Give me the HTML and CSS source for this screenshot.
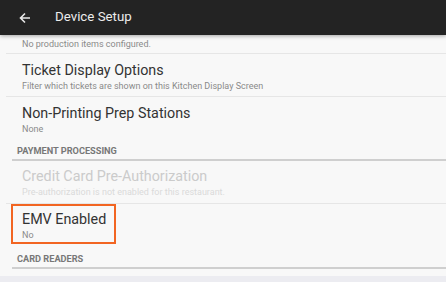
FILE: index.html
```html
<!DOCTYPE html>
<html lang="en">
<head>
  <meta charset="UTF-8" />
  <meta name="viewport" content="width=device-width, initial-scale=1.0" />
  <title>Device Setup</title>
  <link rel="stylesheet" href="styles.css">
</head>
<body>
  <div class="app-bar">
    <svg class="back" width="12" height="12" viewBox="0 0 12 12">
      <path d="M11 6H1.5M6 1.5L1.5 6L6 10.5" fill="none" stroke="#e8e8e8" stroke-width="1.6"/>
    </svg>
    <span class="app-title">Device Setup</span>
  </div>

  <div class="list">
    <div class="item item-partial">
      <div class="item-sub">No production items configured.</div>
    </div>

    <div class="item">
      <div class="item-title">Ticket Display Options</div>
      <div class="item-sub">Filter which tickets are shown on this Kitchen Display Screen</div>
    </div>

    <div class="item no-border">
      <div class="item-title">Non-Printing Prep Stations</div>
      <div class="item-sub">None</div>
    </div>

    <div class="section">Payment Processing</div>

    <div class="item item-disabled">
      <div class="item-title">Credit Card Pre-Authorization</div>
      <div class="item-sub">Pre-authorization is not enabled for this restaurant.</div>
    </div>

    <div class="item item-emv no-border">
      <div class="highlight">
        <div class="item-title">EMV Enabled</div>
        <div class="item-sub">No</div>
      </div>
    </div>

    <div class="section section-last">Card Readers</div>
  </div>

  <div class="bottom-band"></div>
</body>
</html>
```

FILE: styles.css
```css
:root {
  --bar-bg: #232323;
  --page-bg: #f8f8f8;
  --title-color: #333;
  --sub-color: #8a8a8a;
  --divider: #e6e6e6;
  --section-line: #cfcfcf;
  --accent: #f26522;
}

body {
  margin: 0;
  background: var(--page-bg);
  font-family: Roboto, "Liberation Sans", sans-serif;
  height: 282px;
  overflow: hidden;
  display: flex;
  flex-direction: column;
}

.app-bar {
  height: 35px;
  background: var(--bar-bg);
  display: flex;
  align-items: center;
  padding-left: 19px;
  box-shadow: 0 1px 4px rgba(0, 0, 0, 0.35);
  position: relative;
  z-index: 1;
}

.back {
  margin-right: 24px;
}

.app-title {
  color: #ececec;
  font-size: 13.3px;
  line-height: 18px;
  padding-bottom: 2px;
}

.list {
  flex: 1;
}

.item {
  height: 43px;
  box-sizing: border-box;
  padding: 7px 0 0 16px;
  margin-left: 6px;
  border-bottom: 1px solid var(--divider);
  white-space: nowrap;
}

.item.no-border {
  border-bottom: none;
}

.item-partial {
  height: 19px;
  padding-top: 2px;
}

.item-title {
  font-size: 14.3px;
  line-height: 18px;
  color: var(--title-color);
}

.item-sub {
  font-size: 9px;
  line-height: 12px;
  margin-top: 1px;
  color: var(--sub-color);
}

.item-disabled {
  padding-top: 6px;
}

.item-disabled .item-title {
  color: #cbcbcb;
}

.item-disabled .item-sub {
  color: #dadada;
}

.item-emv {
  height: 40px;
  padding: 0 0 0 5px;
}

.highlight {
  width: 105px;
  height: 40px;
  box-sizing: border-box;
  border: 2px solid var(--accent);
  padding: 4px 0 0 9px;
}

.section {
  margin-left: 12px;
  padding: 3px 0 0 5px;
  height: 21px;
  box-sizing: border-box;
  font-size: 9.2px;
  line-height: 16px;
  font-weight: bold;
  text-transform: uppercase;
  color: #777;
  border-bottom: 2px solid var(--section-line);
}

.section-last {
  height: 25px;
  padding-top: 7px;
}

.bottom-band {
  height: 6px;
  background: #ececf1;
}
```
